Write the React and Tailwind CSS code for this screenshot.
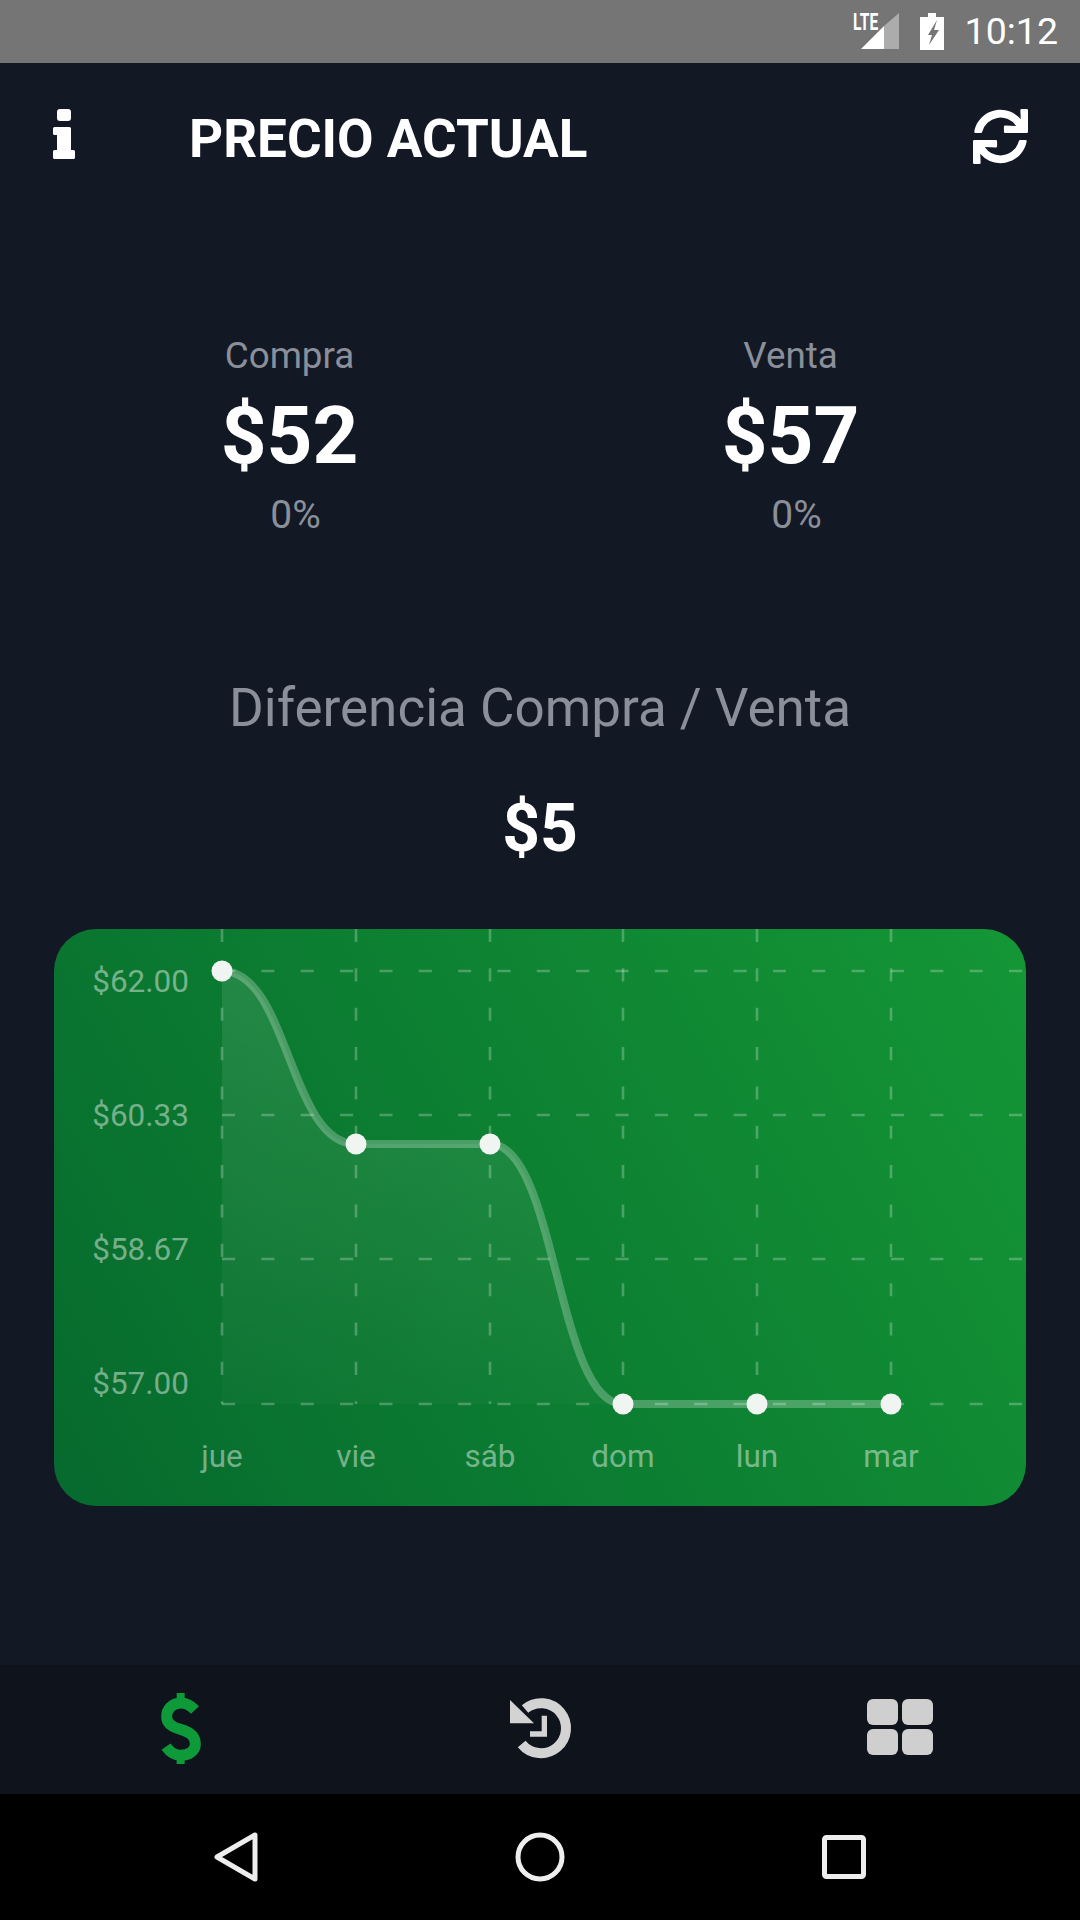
import React from "react";
import { FaSync } from "react-icons/fa";

const font = { fontFamily: "Roboto, sans-serif" };
const xs = [222, 356, 490, 623, 757, 891];
const ys = [971, 1115, 1259, 1404];
const days = ["jue", "vie", "sáb", "dom", "lun", "mar"];
const yLabels = ["$62.00", "$60.33", "$58.67", "$57.00"];
const pts = [971, 1144, 1144, 1404, 1404, 1404];
const OX = 54;
const OY = 929;

function curve() {
  let d = `M${xs[0] - OX} ${pts[0] - OY}`;
  for (let i = 1; i < xs.length; i++) {
    const mid = (xs[i] + xs[i - 1]) / 2 - OX;
    d += ` C${mid} ${pts[i - 1] - OY} ${mid} ${pts[i] - OY} ${xs[i] - OX} ${pts[i] - OY}`;
  }
  return d;
}

function Chart() {
  const line = curve();
  return (
    <div className="mx-[54px] h-[577px] rounded-[42px] overflow-hidden bg-[linear-gradient(59.3deg,#066a2e,#149636)]">
      <svg width="972" height="577" viewBox="0 0 972 577" className="block">
        <defs>
          <linearGradient id="fillG" x1="0" y1="0" x2="0" y2="1">
            <stop offset="0" stopColor="#ffffff" stopOpacity="0.1" />
            <stop offset="1" stopColor="#ffffff" stopOpacity="0.02" />
          </linearGradient>
        </defs>
        {xs.map((x) => (
          <line key={x} x1={x - OX} x2={x - OX} y1="0" y2={1404 - OY} stroke="#ffffff" strokeOpacity="0.25" strokeWidth="2.6" strokeDasharray="13.1 26.25" />
        ))}
        {ys.map((y) => (
          <line key={y} x1={222 - OX} x2="972" y1={y - OY} y2={y - OY} stroke="#ffffff" strokeOpacity="0.25" strokeWidth="2.6" strokeDasharray="13.1 26.25" />
        ))}
        <path d={`${line} L${891 - OX} ${1404 - OY} L${222 - OX} ${1404 - OY} Z`} fill="url(#fillG)" />
        <path d={line} fill="none" stroke="#ffffff" strokeOpacity="0.25" strokeWidth="8" />
        {xs.map((x, i) => (
          <circle key={x} cx={x - OX} cy={pts[i] - OY} r="10.5" fill="#f1f5f2" />
        ))}
        {yLabels.map((t, i) => (
          <text key={t} x="135" y={[63, 197, 331, 465][i]} textAnchor="end" fill="#ffffff" fillOpacity="0.45" fontSize="31.5" style={font}>{t}</text>
        ))}
        {days.map((t, i) => (
          <text key={t} x={xs[i] - OX} y="538" textAnchor="middle" fill="#ffffff" fillOpacity="0.45" fontSize="31.5" style={font}>{t}</text>
        ))}
      </svg>
    </div>
  );
}

function StatusBar() {
  return (
    <div className="h-[63px] bg-[#757575] flex items-center justify-end pr-[22px]">
      <div className="relative w-[46px] h-[36px] mr-[21px] mt-[-1px]">
        <span className="absolute left-0 top-[-2px] text-[23px] leading-[23px] font-bold text-white origin-left scale-x-[0.68]">LTE</span>
        <svg width="46" height="36" viewBox="0 0 46 36" className="block">
          <path d="M8 36 L31 36 L31 13 Z" fill="#fff" />
          <path d="M31 36 L31 13 L46 0 L46 36 Z" fill="#fff" fillOpacity="0.4" />
        </svg>
      </div>
      <svg width="24" height="37" viewBox="0 0 24 37" className="mr-[21px]">
        <path d="M8 0 H16 V4 H24 V37 H0 V4 H8 Z" fill="#fff" />
        <path d="M17 7 L8 22 H12 L9 32 L19 17 H14 Z" fill="#757575" />
      </svg>
      <span className="text-[37.5px] leading-none text-white">10:12</span>
    </div>
  );
}

function Stat({ label, value, pct }) {
  return (
    <div className="flex flex-col items-center w-[132px]">
      <span className="text-[36.75px] leading-[50px] text-[#8b8f99]">{label}</span>
      <span className="text-[80px] leading-[98px] font-bold text-white mt-[6px]">{value}</span>
      <span className="text-[39px] leading-[50px] text-[#8b8f99] mt-[5px] ml-[12px]">{pct}</span>
    </div>
  );
}

export default function App() {
  return (
    <div className="w-[1080px] h-[1920px] flex flex-col bg-[#121925]" style={font}>
      <StatusBar />
      <div className="h-[147px] flex items-center border-b border-[#141b27]">
        <svg width="22" height="50" viewBox="0 0 22 50" className="ml-[53px] mt-[-5px]">
          <rect x="4" y="0" width="14" height="12" rx="3" fill="#fff" />
          <path d="M1.5 18 H16.5 A1.5 1.5 0 0 1 18 19.5 V41 H20.5 A1.5 1.5 0 0 1 22 42.5 V48.5 A1.5 1.5 0 0 1 20.5 50 H1.5 A1.5 1.5 0 0 1 0 48.5 V42.5 A1.5 1.5 0 0 1 1.5 41 H4 V26 H1.5 A1.5 1.5 0 0 1 0 24.5 V19.5 A1.5 1.5 0 0 1 1.5 18 Z" fill="#fff" />
        </svg>
        <span className="ml-[114px] text-[53px] leading-none font-bold text-white mt-[6px]">PRECIO ACTUAL</span>
        <FaSync className="text-white ml-auto mr-[52px] w-[55px] h-[55px]" />
      </div>
      <div className="flex-1 flex flex-col">
        <div className="flex justify-center gap-[369px] pt-[121px]">
          <Stat label="Compra" value="$52" pct="0%" />
          <Stat label="Venta" value="$57" pct="0%" />
        </div>
        <div className="mt-[137px] text-center text-[53px] leading-[62px] text-[#8b8f99]">Diferencia Compra / Venta</div>
        <div className="mt-[53px] text-center text-[66px] leading-[74px] font-bold text-white">$5</div>
        <div className="mt-[63px]"><Chart /></div>
      </div>
      <div className="h-[129px] bg-[#0e131c] flex items-center">
        <div className="flex-1 flex justify-center">
          <svg width="80" height="90" viewBox="0 0 240 270" className="ml-[-130px] mt-[-1px]">
            <path d="M165 78 C150 62 138 57 122 57 C95 57 80 78 80 98 C80 120 100 130 122 136 C150 144 166 156 166 180 C166 200 148 214 122 214 C105 214 90 205 78 188" fill="none" stroke="#0f9a3a" strokeWidth="33" />
            <path d="M122 27 V60 M122 210 V240" fill="none" stroke="#0f9a3a" strokeWidth="24" />
          </svg>
        </div>
        <svg width="100" height="90" viewBox="0 0 300 270" className="mt-[-1px]">
          <path d="M105 75 A75 75 0 1 1 95 180" fill="none" stroke="#d3d3d3" strokeWidth="30" />
          <path d="M60 48 L132 118 H60 Z" fill="#d3d3d3" />
          <path d="M163 95 V150 H120" fill="none" stroke="#d3d3d3" strokeWidth="16" />
        </svg>
        <div className="flex-1 flex justify-center">
          <svg width="66" height="56" viewBox="0 0 66 56" className="ml-[130px] mt-[-6px]">
            <rect x="0" y="0" width="31" height="26" rx="6" fill="#cfcfcf" />
            <rect x="35" y="0" width="31" height="26" rx="6" fill="#cfcfcf" />
            <rect x="0" y="30" width="31" height="26" rx="6" fill="#cfcfcf" />
            <rect x="35" y="30" width="31" height="26" rx="6" fill="#cfcfcf" />
          </svg>
        </div>
      </div>
      <div className="h-[126px] bg-black relative">
        <svg width="44" height="50" viewBox="0 0 44 50" className="absolute left-[214px] top-[38px]">
          <path d="M41 3 V47 L3 25 Z" fill="none" stroke="#eeeeee" strokeWidth="5" strokeLinejoin="round" />
        </svg>
        <svg width="50" height="50" viewBox="0 0 50 50" className="absolute left-[515px] top-[38px]">
          <circle cx="25" cy="25" r="22" fill="none" stroke="#eeeeee" strokeWidth="5" />
        </svg>
        <svg width="44" height="44" viewBox="0 0 44 44" className="absolute left-[822px] top-[41px]">
          <rect x="2.5" y="2.5" width="39" height="39" rx="2" fill="none" stroke="#eeeeee" strokeWidth="5" />
        </svg>
      </div>
    </div>
  );
}
